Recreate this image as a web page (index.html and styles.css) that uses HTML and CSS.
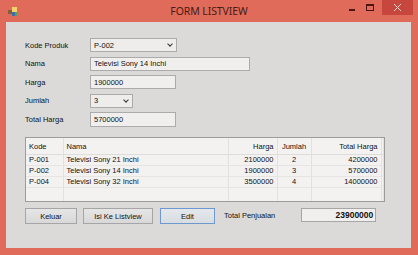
FILE: index.html
```html
<!DOCTYPE html>
<html>
<head>
<meta charset="utf-8">
<link rel="stylesheet" href="styles.css">
</head>
<body>
<div class="window">
  <div class="titlebar">
    <svg class="appicon" width="10" height="10" viewBox="0 0 10 10">
      <rect x="0" y="3" width="4" height="4" fill="#8a5a3a"/>
      <rect x="4" y="0" width="5" height="5" fill="#f2d36a"/>
      <rect x="4" y="5" width="3" height="4" fill="#3a6fa8"/>
      <rect x="7" y="5" width="2" height="4" fill="#5aa05a"/>
    </svg>
    <div class="title">FORM LISTVIEW</div>
    <div class="controls">
      <div class="ctlbox"><div class="minbar"></div></div>
      <div class="ctlbox"><div class="maxbox"></div></div>
      <div class="closebox"><div class="xmark"></div></div>
    </div>
  </div>
  <div class="client">
    <div class="form">
      <label>Kode Produk</label>
      <div class="combo w87"><span>P-002</span><i class="chev"></i></div>
      <label>Nama</label>
      <div class="text w160">Televisi Sony 14 Inchi</div>
      <label>Harga</label>
      <div class="text w86">1900000</div>
      <label>Jumlah</label>
      <div class="combo w43"><span>3</span><i class="chev"></i></div>
      <label>Total Harga</label>
      <div class="text w86 tall">5700000</div>
    </div>
    <div class="listview">
      <table>
        <colgroup>
          <col class="c1"><col class="c2"><col class="c3"><col class="c4"><col class="c5"><col>
        </colgroup>
        <thead>
          <tr><th>Kode</th><th>Nama</th><th class="r">Harga</th><th class="c">Jumlah</th><th class="r">Total Harga</th><th></th></tr>
        </thead>
        <tbody>
          <tr><td>P-001</td><td>Televisi Sony 21 Inchi</td><td class="r">2100000</td><td class="c">2</td><td class="r">4200000</td><td></td></tr>
          <tr><td>P-002</td><td>Televisi Sony 14 Inchi</td><td class="r">1900000</td><td class="c">3</td><td class="r">5700000</td><td></td></tr>
          <tr><td>P-004</td><td>Televisi Sony 32 Inchi</td><td class="r">3500000</td><td class="c">4</td><td class="r">14000000</td><td></td></tr>
          <tr class="empty"><td></td><td></td><td></td><td></td><td></td><td></td></tr>
        </tbody>
      </table>
    </div>
    <div class="bottom">
      <button class="btn b-keluar">Keluar</button>
      <button class="btn b-isi">Isi Ke Listview</button>
      <button class="btn b-edit">Edit</button>
      <span class="totlabel">Total Penjualan</span>
      <div class="totbox">23900000</div>
    </div>
  </div>
</div>
</body>
</html>
```
FILE: styles.css
```css
* { box-sizing: border-box; }
html, body { margin: 0; padding: 0; }
body {
  width: 418px;
  height: 255px;
  overflow: hidden;
  font-family: "Liberation Sans", Arial, sans-serif;
  font-size: 7.5px;
  color: #111;
  background: #e06b5b;
}
.window {
  width: 418px;
  height: 255px;
  background: #e06b5b;
  display: flex;
  flex-direction: column;
}
.titlebar {
  height: 22px;
  display: flex;
  align-items: flex-start;
  position: relative;
}
.appicon {
  margin: 7px 0 0 8px;
  flex: none;
}
.title {
  position: absolute;
  left: 0;
  right: 0;
  top: 4px;
  text-align: center;
  font-family: "Noto Sans", "Open Sans", sans-serif;
  font-size: 10.5px;
  color: #4a1a14;
  letter-spacing: -0.1px;
}
.controls {
  margin-left: auto;
  margin-right: 5px;
  display: flex;
  height: 15px;
  position: relative;
  z-index: 2;
}
.ctlbox {
  width: 17px;
  height: 15px;
  flex: none;
  position: relative;
}
.minbar {
  position: absolute;
  left: 5px;
  top: 9px;
  width: 6px;
  height: 2px;
  background: #4a1510;
}
.maxbox {
  position: absolute;
  left: 5px;
  top: 4px;
  width: 8px;
  height: 7px;
  border: 1px solid #4a1510;
  border-top-width: 2px;
}
.closebox {
  width: 31px;
  height: 15px;
  flex: none;
  margin-left: 4px;
  background: #c7473e;
  position: relative;
}
.xmark {
  position: absolute;
  left: 12px;
  top: 4px;
  width: 7px;
  height: 7px;
  background:
    linear-gradient(45deg, transparent 43%, #f6dcd8 43%, #f6dcd8 57%, transparent 57%),
    linear-gradient(-45deg, transparent 43%, #f6dcd8 43%, #f6dcd8 57%, transparent 57%);
}
.client {
  margin: 0 7px 7px 6px;
  flex: 1;
  background: #dcdad8;
  padding: 16px 0 0 19px;
}
.form {
  display: grid;
  grid-template-columns: 65px auto;
  grid-auto-rows: 14px;
  row-gap: 4.5px;
  align-items: center;
  justify-items: start;
}
.form label {
  align-self: center;
}
.text, .combo {
  height: 14px;
  border: 1px solid #ababab;
  background: #f0efee;
  display: flex;
  align-items: center;
  padding-left: 3px;
}
.text.tall { height: 15px; }
.combo { background: #eeedec; justify-content: space-between; padding-right: 4px; }
.w87 { width: 87px; }
.w160 { width: 160px; }
.w86 { width: 86px; }
.w43 { width: 43px; }
.chev {
  width: 4px;
  height: 4px;
  border-right: 1.3px solid #333;
  border-bottom: 1.3px solid #333;
  transform: rotate(45deg);
  margin-top: -2px;
}
.listview {
  margin-top: 11px;
  width: 360px;
  height: 65px;
  border: 1px solid #9c9c9c;
  background: #f3f2f1;
  overflow: hidden;
}
table {
  border-collapse: collapse;
  table-layout: fixed;
  width: 100%;
}
col.c1 { width: 37px; }
col.c2 { width: 165px; }
col.c3 { width: 49px; }
col.c4 { width: 34px; }
col.c5 { width: 70px; }
th, td {
  padding: 0 3px;
  white-space: nowrap;
  overflow: hidden;
  font-weight: normal;
  text-align: left;
  border-right: 1px solid #e2e1e0;
}
th {
  height: 16px;
  border-bottom: 1px solid #dedddc;
  padding-top: 1px;
}
td {
  height: 11px;
  border-bottom: 1px solid #e6e5e4;
  line-height: 10px;
}
tr.empty td { height: 20px; border-bottom: none; }
.r { text-align: right; }
.c { text-align: center; }
.bottom {
  margin-top: 6px;
  display: flex;
  align-items: flex-start;
  height: 16px;
}
.btn {
  font-family: inherit;
  font-size: 7.5px;
  color: #111;
  height: 16px;
  border: 1px solid #a6a6a6;
  background: linear-gradient(#e6e6e6, #d8d8d8);
  padding: 0;
  margin: 0;
}
.b-keluar { width: 52px; }
.b-isi { width: 70px; margin-left: 6px; }
.b-edit { width: 55px; margin-left: 7px; border-color: #6e98cf; background: linear-gradient(#e4e8ec, #d8dde2); }
.totlabel {
  margin-left: 9px;
  line-height: 15px;
}
.totbox {
  margin-left: 26px;
  width: 75px;
  height: 14px;
  border: 1px solid #a6a6a6;
  background: #f0efee;
  font-weight: bold;
  font-size: 8.5px;
  text-align: right;
  padding-right: 2px;
  line-height: 12px;
}
```
